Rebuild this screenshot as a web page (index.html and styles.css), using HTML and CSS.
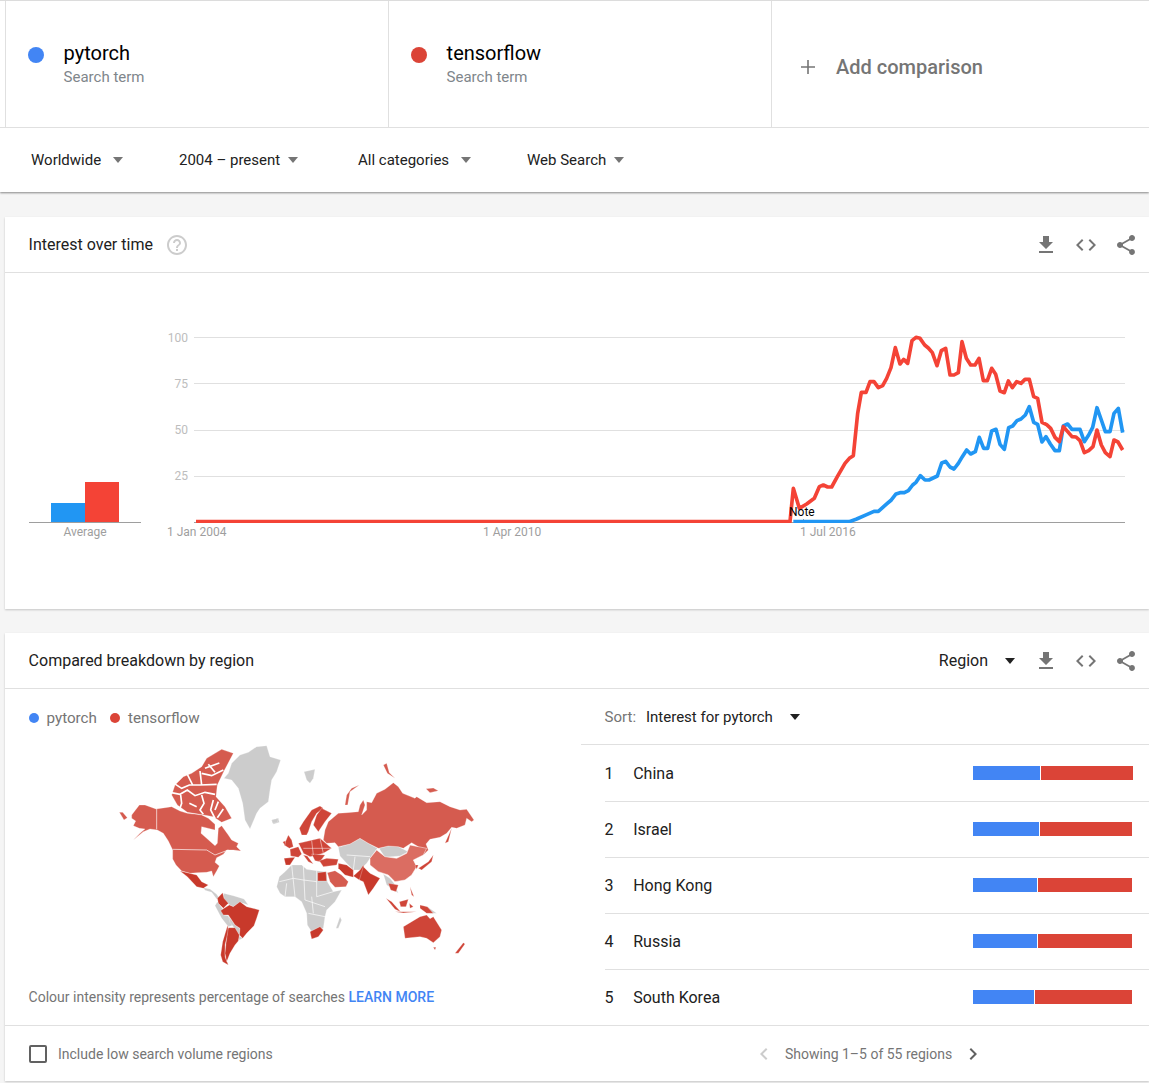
FILE: index.html
```html
<!DOCTYPE html>
<html lang="en">
<head>
<meta charset="utf-8">
<title>Google Trends - pytorch vs tensorflow</title>
<link rel="stylesheet" href="styles.css">
</head>
<body>
<header class="top">
  <div class="terms">
    <div class="term">
      <span class="dot dot-blue"></span>
      <div><div class="term-name">pytorch</div><div class="term-sub">Search term</div></div>
    </div>
    <div class="term">
      <span class="dot dot-red"></span>
      <div><div class="term-name">tensorflow</div><div class="term-sub">Search term</div></div>
    </div>
    <div class="term term-add">
      <svg class="plus" width="16" height="16" viewBox="0 0 16 16"><path d="M8 1v14M1 8h14" stroke="#757575" stroke-width="1.6" fill="none"/></svg>
      <span class="add-label">Add comparison</span>
    </div>
  </div>
  <div class="filters">
    <div class="filter filter-wide">Worldwide<span class="arrow"></span></div>
    <div class="filter">2004 – present<span class="arrow"></span></div>
    <div class="filter filter-wide">All categories<span class="arrow"></span></div>
    <div class="filter">Web Search<span class="arrow"></span></div>
  </div>
</header>

<main class="page">
  <section class="card">
    <div class="card-head">
      <h2 class="card-title">Interest over time</h2>
      <svg class="help" width="24" height="24" viewBox="0 0 24 24"><path d="M11 18h2v-2h-2v2zm1-16C6.48 2 2 6.48 2 12s4.48 10 10 10 10-4.48 10-10S17.52 2 12 2zm0 18c-4.41 0-8-3.59-8-8s3.59-8 8-8 8 3.59 8 8-3.59 8-8 8zm0-14c-2.21 0-4 1.79-4 4h2c0-1.1.9-2 2-2s2 .9 2 2c0 2-3 1.75-3 5h2c0-2.25 3-2.5 3-5 0-2.21-1.79-4-4-4z"/></svg>
      <div class="actions">
        <svg class="icon" width="24" height="24" viewBox="0 0 24 24"><path d="M19 9h-4V3H9v6H5l7 7 7-7zM5 18v2h14v-2H5z"/></svg>
        <svg class="icon" width="24" height="24" viewBox="0 0 24 24"><path d="M9.4 16.6L4.8 12l4.6-4.6L8 6l-6 6 6 6 1.4-1.4zm5.2 0l4.6-4.6-4.6-4.6L16 6l6 6-6 6-1.4-1.4z"/></svg>
        <svg class="icon" width="24" height="24" viewBox="0 0 24 24"><path d="M18 16.08c-.76 0-1.44.3-1.96.77L8.91 12.7c.05-.23.09-.46.09-.7s-.04-.47-.09-.7l7.05-4.11c.54.5 1.25.81 2.04.81 1.66 0 3-1.34 3-3s-1.34-3-3-3-3 1.34-3 3c0 .24.04.47.09.7L8.04 9.81C7.5 9.31 6.79 9 6 9c-1.66 0-3 1.34-3 3s1.34 3 3 3c.79 0 1.5-.31 2.04-.81l7.12 4.16c-.05.21-.08.43-.08.65 0 1.61 1.31 2.92 2.92 2.92 1.61 0 2.92-1.31 2.92-2.92s-1.31-2.92-2.92-2.92z"/></svg>
      </div>
    </div>
    <svg class="chart" width="1144" height="336" viewBox="5 273 1144 336">
      <defs>
        <clipPath id="plot-clip"><rect x="190" y="300" width="940" height="223"/></clipPath>
      </defs>
      <g class="grid">
        <line x1="194" x2="1125" y1="337.5" y2="337.5"/>
        <line x1="194" x2="1125" y1="383.5" y2="383.5"/>
        <line x1="194" x2="1125" y1="430.5" y2="430.5"/>
        <line x1="194" x2="1125" y1="476.5" y2="476.5"/>
      </g>
      <line class="axis" x1="29" x2="141" y1="522.5" y2="522.5"/>
      <line class="axis" x1="194" x2="1125" y1="522.5" y2="522.5"/>
      <line class="axis" x1="803.5" x2="803.5" y1="519" y2="522"/>
      <rect x="51" y="503" width="34" height="19" fill="#2196f3"/>
      <rect x="85" y="482" width="34" height="40" fill="#f44336"/>
      <g class="ylabels">
        <text x="188" y="342">100</text>
        <text x="188" y="388">75</text>
        <text x="188" y="434">50</text>
        <text x="188" y="480">25</text>
      </g>
      <text class="tick tick-mid" x="85" y="536">Average</text>
      <text class="tick" x="167" y="536">1 Jan 2004</text>
      <text class="tick" x="483" y="536">1 Apr 2010</text>
      <text class="tick" x="800" y="536">1 Jul 2016</text>
      <g clip-path="url(#plot-clip)">
        <g transform="translate(760 320) scale(.33333)">
          <polyline class="line line-blue" points="100,605 268,605 290,597 320,584 342,574 355,574 381,551 394,540 408,522 420,518 433,518 445,512 458,495 468,487 481,467 495,480 507,480 532,468 545,429 557,424 570,441 582,447 595,430 607,410 620,390 632,402 646,395 658,352 671,385 683,385 695,333 708,328 720,373 733,388 746,323 758,318 771,302 783,297 796,285 808,260 821,307 833,313 846,366 858,350 871,372 885,392 898,392 910,318 923,312 936,328 960,328 973,365 986,345 998,322 1011,263 1024,300 1036,335 1050,335 1062,280 1075,265 1088,338"/>
          <polyline class="line line-red" points="-1692,605 90,605 100,505 118,565 140,552 163,535 178,500 190,495 203,501 215,501 232,470 255,430 268,415 280,407 293,280 304,217 318,217 330,185 342,185 355,203 368,197 380,175 393,143 406,83 420,132 431,118 443,130 456,62 468,52 480,55 494,75 505,84 517,98 531,137 544,92 557,85 570,165 582,165 595,158 606,65 619,115 632,135 645,135 657,115 670,182 682,182 695,145 707,163 720,213 733,218 745,183 757,203 770,185 783,190 795,178 808,178 821,230 833,235 846,307 860,314 872,325 885,352 898,365 910,320 923,335 936,350 948,351 960,362 973,398 986,392 999,380 1011,330 1024,375 1036,398 1050,410 1062,360 1074,366 1088,390"/>
        </g>
      </g>
      <text class="note" x="789" y="516">Note</text>
    </svg>
  </section>

  <section class="card card-region">
    <div class="card-head">
      <h2 class="card-title">Compared breakdown by region</h2>
      <div class="region-select">Region<span class="arrow arrow-dark"></span></div>
      <div class="actions actions-region">
        <svg class="icon" width="24" height="24" viewBox="0 0 24 24"><path d="M19 9h-4V3H9v6H5l7 7 7-7zM5 18v2h14v-2H5z"/></svg>
        <svg class="icon" width="24" height="24" viewBox="0 0 24 24"><path d="M9.4 16.6L4.8 12l4.6-4.6L8 6l-6 6 6 6 1.4-1.4zm5.2 0l4.6-4.6-4.6-4.6L16 6l6 6-6 6-1.4-1.4z"/></svg>
        <svg class="icon" width="24" height="24" viewBox="0 0 24 24"><path d="M18 16.08c-.76 0-1.44.3-1.96.77L8.91 12.7c.05-.23.09-.46.09-.7s-.04-.47-.09-.7l7.05-4.11c.54.5 1.25.81 2.04.81 1.66 0 3-1.34 3-3s-1.34-3-3-3-3 1.34-3 3c0 .24.04.47.09.7L8.04 9.81C7.5 9.31 6.79 9 6 9c-1.66 0-3 1.34-3 3s1.34 3 3 3c.79 0 1.5-.31 2.04-.81l7.12 4.16c-.05.21-.08.43-.08.65 0 1.61 1.31 2.92 2.92 2.92 1.61 0 2.92-1.31 2.92-2.92s-1.31-2.92-2.92-2.92z"/></svg>
      </div>
    </div>
    <div class="region-body">
      <div class="region-left">
        <div class="legend">
          <span class="legend-dot dot-blue"></span><span class="legend-label">pytorch</span>
          <span class="legend-dot dot-red"></span><span class="legend-label">tensorflow</span>
        </div>
        <svg class="map" width="400" height="240" viewBox="100 735 400 240">
          <g transform="translate(100 735) scale(.33333)">
            <g class="grey">
              <polygon points="372,130 385,115 395,85 420,60 445,52 470,35 500,32 510,65 542,75 530,110 515,135 510,165 505,200 480,220 470,235 450,282 435,255 428,205 415,160 395,135"/>
              <polygon points="515,255 535,250 538,262 520,268"/>
              <polygon points="310,458 330,462 350,478 358,490 350,492 335,472 315,466"/>
              <polygon points="370,475 400,482 432,492 445,510 420,502 400,515 388,510 372,492"/>
              <polygon points="345,512 352,500 368,522 372,540 385,542 400,570 385,575 365,550"/>
              <polygon points="385,542 405,570 420,580 418,600 400,575 390,562"/>
              <polygon points="412,600 428,610 418,615"/>
            </g>
            <g class="mid">
              <polygon points="95,240 118,210 135,210 168,222 195,218 215,215 240,228 262,235 290,238 305,240 325,250 345,268 345,285 305,275 303,295 320,310 345,332 352,325 355,280 365,272 385,300 395,315 415,325 410,335 423,348 400,345 380,345 370,358 350,368 345,382 358,393 350,408 340,425 335,408 320,412 290,413 270,415 245,408 228,390 218,372 218,345 205,318 190,295 172,285 150,282 130,290 100,315 120,295 135,282 118,280 100,272 107,258 95,250"/>
              <polygon points="58,232 68,232 82,248 72,255"/>
              <polygon points="215,180 225,150 250,125 275,115 305,95 320,70 365,43 400,55 372,108 352,150 348,185 375,215 395,250 365,262 340,245 300,238 262,232 232,210"/>
            </g>
            <g class="white-lines">
              <polyline points="170,222 170,283"/>
              <polyline points="218,343 320,345 345,360 385,345"/>
            </g>
            <g class="cuts">
              <polyline points="210,172 240,178 262,165 285,182 315,172 345,178"/>
              <polyline points="242,180 245,205 238,225"/>
              <polyline points="305,180 312,205 300,225 310,238"/>
              <polyline points="340,195 332,225 345,250"/>
              <polyline points="222,145 245,160 268,150 300,150 350,148"/>
              <polyline points="262,118 278,150"/>
              <polyline points="300,108 305,150"/>
              <polyline points="305,115 335,122 370,105"/>
              <polyline points="325,88 345,112"/>
              <polyline points="315,100 358,84"/>
              <polyline points="355,200 345,225"/>
              <polyline points="370,222 352,248"/>
              <polyline points="268,205 290,215"/>
            </g>
            <g class="dark">
              <polygon points="240,408 290,420 305,440 325,450 310,460 290,455 262,425"/>
              <polygon points="352,490 368,473 372,490 385,505 370,520 355,505"/>
              <polygon points="362,527 372,520 388,510 400,515 420,500 440,515 478,525 470,550 462,572 440,595 428,610 418,600 420,580 405,570 385,540 370,540"/>
              <polygon points="383,570 385,590 375,630 375,665 385,690 368,680 362,660 368,620"/>
              <polygon points="385,578 405,578 418,600 415,618 405,630 390,655 380,680 375,655 378,625"/>
            </g>
          </g>
          <g transform="translate(270 750) scale(.33333)">
            <g class="grey">
              <polygon points="20,410 28,380 45,365 65,345 95,345 110,358 140,362 170,365 172,395 190,425 215,420 195,455 170,480 165,500 160,535 125,545 112,525 110,490 95,455 75,440 45,440 30,430"/>
              <polygon points="198,535 210,500 215,510 205,535"/>
              <polygon points="102,65 135,58 130,85 120,100 110,90"/>
              <polygon points="5,210 25,205 22,218 8,220"/>
              <polygon points="205,292 240,282 270,265 295,280 322,295 305,318 290,340 270,360 250,360 230,340 210,318"/>
              <polygon points="327,295 355,288 385,290 415,305 390,318 345,322"/>
              <polygon points="340,372 360,385 372,400 385,430 365,415 350,405"/>
              <polygon points="472,470 500,490 480,490"/>
            </g>
            <g class="white-lines">
              <polyline points="28,395 70,385 100,390 140,395"/>
              <polyline points="65,345 75,440"/>
              <polyline points="100,345 105,450"/>
              <polyline points="140,362 140,440 190,425"/>
              <polyline points="105,450 165,470"/>
              <polyline points="115,490 165,500"/>
              <polyline points="125,440 130,490"/>
              <polyline points="50,400 45,440"/>
              <polyline points="230,315 300,320"/>
              <polyline points="255,320 250,360"/>
            </g>
            <g class="mid">
              <polygon points="160,270 165,240 175,215 205,190 230,188 265,185 270,165 280,150 285,165 275,195 290,180 290,155 305,158 320,130 345,118 370,98 385,110 398,130 435,145 440,140 470,158 510,155 540,170 570,180 590,178 612,210 605,215 590,205 585,225 560,235 545,232 530,250 510,262 480,268 468,282 475,300 460,315 445,290 425,278 400,295 385,290 355,288 325,295 295,280 270,265 240,282 205,290 195,278 170,280"/>
              <polygon points="225,165 230,135 245,115 268,105 240,125 233,165"/>
              <polygon points="340,45 350,40 358,68 375,85 352,70"/>
              <polygon points="468,116 490,114 505,122 480,128"/>
              <polygon points="172,368 195,362 215,375 235,395 228,410 195,412 180,395"/>
            </g>
            <g class="light">
              <polygon points="300,325 320,300 345,320 380,325 410,310 420,285 445,290 470,295 460,315 430,330 440,350 425,375 405,390 375,395 355,375 325,365 300,345"/>
            </g>
            <g class="red">
              <polygon points="88,235 100,215 125,180 150,168 160,175 140,190 125,215 115,245 110,255 95,255"/>
              <polygon points="155,175 185,190 165,215 145,245 130,225 140,195"/>
              <polygon points="42,285 55,255 65,270 70,290 58,295"/>
              <polygon points="38,276 47,272 45,286"/>
              <polygon points="60,298 85,290 95,312 85,322 62,318"/>
              <polygon points="85,280 150,265 185,295 160,310 120,320 100,310"/>
              <polygon points="100,315 112,318 130,342 115,335"/>
              <polygon points="125,312 165,315 150,335 135,332"/>
              <polygon points="148,332 170,325 205,328 200,345 160,350"/>
              <polygon points="400,530 425,515 450,500 470,495 480,506 490,500 515,540 510,560 490,578 470,565 450,560 405,565"/>
              <polygon points="490,592 498,592 495,600"/>
              <polygon points="348,445 365,455 392,485 375,478"/>
              <polygon points="388,455 415,448 408,470 392,470"/>
              <polygon points="375,485 440,485 400,489"/>
              <polygon points="418,460 430,470 420,475"/>
              <polygon points="450,465 472,470 490,490 470,490 450,475"/>
              <polygon points="420,410 432,440 425,435"/>
              <polygon points="445,355 475,335 490,315 485,335 455,360"/>
              <polygon points="435,345 445,345 440,358"/>
              <polygon points="525,280 545,235 535,275"/>
              <polygon points="555,610 580,578 585,582 565,610"/>
              <polygon points="355,400 385,405 378,425 362,420"/>
            </g>
            <g class="dark">
              <polygon points="120,545 150,530 160,540 145,560 125,567"/>
              <polygon points="143,368 168,365 170,393 143,393"/>
              <polygon points="205,340 230,345 250,360 250,382 225,375 205,355"/>
              <polygon points="250,378 270,360 280,345 285,365 268,390"/>
              <polygon points="280,350 300,370 330,385 310,415 295,435 280,395 268,390"/>
              <polygon points="42,325 75,322 60,345 47,345"/>
            </g>
            <g class="white-lines thin">
              <polyline points="85,280 100,310"/>
              <polyline points="125,272 130,315"/>
              <polyline points="150,265 160,310"/>
              <polyline points="100,295 185,295"/>
            </g>
          </g>
        </svg>
        <p class="caption">Colour intensity represents percentage of searches <a class="learn" href="#">LEARN MORE</a></p>
      </div>
      <div class="region-right">
        <div class="sort">
          <span class="sort-label">Sort:</span>
          <span class="sort-value">Interest for pytorch</span>
          <span class="arrow arrow-dark"></span>
        </div>
        <ol class="rows">
          <li class="row"><span class="num">1</span><span class="name">China</span><span class="bars"><i class="bar-b" style="width:67px"></i><i class="bar-r" style="width:92px"></i></span></li>
          <li class="row"><span class="num">2</span><span class="name">Israel</span><span class="bars"><i class="bar-b" style="width:66px"></i><i class="bar-r" style="width:92px"></i></span></li>
          <li class="row"><span class="num">3</span><span class="name">Hong Kong</span><span class="bars"><i class="bar-b" style="width:64px"></i><i class="bar-r" style="width:94px"></i></span></li>
          <li class="row"><span class="num">4</span><span class="name">Russia</span><span class="bars"><i class="bar-b" style="width:64px"></i><i class="bar-r" style="width:94px"></i></span></li>
          <li class="row"><span class="num">5</span><span class="name">South Korea</span><span class="bars"><i class="bar-b" style="width:61px"></i><i class="bar-r" style="width:97px"></i></span></li>
        </ol>
      </div>
    </div>
    <div class="card-foot">
      <span class="checkbox"></span>
      <span class="check-label">Include low search volume regions</span>
      <div class="pager">
        <svg class="chev chev-off" width="24" height="24" viewBox="0 0 24 24"><path d="M15.41 7.41L14 6l-6 6 6 6 1.41-1.41L10.83 12z"/></svg>
        <span class="pager-text">Showing 1–5 of 55 regions</span>
        <svg class="chev" width="24" height="24" viewBox="0 0 24 24"><path d="M10 6L8.59 7.41 13.17 12l-4.58 4.59L10 18l6-6z"/></svg>
      </div>
    </div>
  </section>
</main>
</body>
</html>
```
FILE: styles.css
```css
* { box-sizing: border-box; }
html, body { margin: 0; padding: 0; }
body {
  width: 1149px;
  height: 1083px;
  overflow: hidden;
  background: #f5f5f5;
  font-family: Roboto, "Liberation Sans", sans-serif;
  color: #212121;
}
.top {
  background: #fff;
  border-top: 1px solid #dcdcdc;
  box-shadow: 0 1px 2px rgba(0, 0, 0, .45);
  position: relative;
}
.terms {
  display: flex;
  height: 127px;
  padding-left: 5px;
  border-bottom: 1px solid #e0e0e0;
}
.term {
  width: 383px;
  border-left: 1px solid #e0e0e0;
  display: flex;
  align-items: flex-start;
  padding: 40px 0 0 22px;
  gap: 19.6px;
}
.dot { display: block; width: 16px; height: 16px; border-radius: 50%; margin-top: 6px; flex: none; }
.dot-blue { background: #4285f4; }
.dot-red { background: #db4437; }
.term-name { font-size: 20px; line-height: 24px; color: #000; }
.term-sub { font-size: 15px; line-height: 25px; color: #80868b; }
.term-add {
  flex: 1;
  padding: 6px 0 0 28px;
  align-items: center;
  gap: 20px;
}
.add-label { font-size: 20px; font-weight: 500; color: #757575; }
.plus { flex: none; }
.filters {
  display: grid;
  grid-template-columns: 148px 179px 169px auto;
  align-items: center;
  justify-content: start;
  height: 64px;
  padding-left: 31px;
  font-size: 15px;
}
.filter { display: flex; align-items: center; gap: 8px; }
.filter-wide { gap: 12px; }
.arrow {
  display: block;
  width: 0;
  height: 0;
  border-left: 5.5px solid transparent;
  border-right: 5.5px solid transparent;
  border-top: 6px solid #757575;
  flex: none;
}
.arrow-dark { border-top-color: #212121; }
.page { padding: 25px 0 0 5px; }
.card {
  background: #fff;
  box-shadow: 0 1px 2px rgba(0, 0, 0, .2);
}
.card-region { margin-top: 24px; }
.card-head {
  display: flex;
  align-items: center;
  height: 56px;
  padding: 0 11px 0 23.6px;
  border-bottom: 1px solid #e0e0e0;
}
.card-title { margin: 0; font-size: 16px; font-weight: 400; color: #212121; }
.help { fill: #ccc; margin-left: 12px; }
.actions { display: flex; gap: 16px; margin-left: auto; }
.actions-region { margin-left: 16px; }
.icon { fill: #757575; display: block; }
.region-select {
  display: flex;
  align-items: center;
  gap: 17px;
  margin-left: auto;
  font-size: 16px;
}
.region-select .arrow { margin-right: 3px; }
.chart { display: block; }
.grid line { stroke: #e0e0e0; stroke-width: 1; }
.axis { stroke: #9e9e9e; stroke-width: 1; }
.ylabels text { font-size: 12px; fill: #bdbdbd; text-anchor: end; }
.tick { font-size: 12px; fill: #9e9e9e; }
.tick-mid { text-anchor: middle; }
.note { font-size: 12px; fill: #000; }
.line { fill: none; stroke-width: 11; stroke-linejoin: round; }
.line-blue { stroke: #2196f3; }
.line-red { stroke: #f44336; }
.region-body { display: flex; height: 336px; }
.region-left { width: 576px; display: flex; flex-direction: column; }
.legend {
  display: flex;
  align-items: center;
  height: 46px;
  padding: 12px 0 0 24px;
  font-size: 15.2px;
  color: #757575;
}
.legend-dot { width: 10px; height: 10px; border-radius: 50%; margin-right: 7.5px; }
.legend-label { margin-right: 13.5px; }
.map { display: block; margin-left: 95px; flex: none; }
.grey polygon { fill: #ccc; stroke: #fff; stroke-width: .8; }
.mid polygon { fill: #d55b4f; stroke: #fff; stroke-width: .8; }
.light polygon { fill: #db6d62; stroke: #fff; stroke-width: 1.5; }
.red polygon { fill: #cf4538; stroke: #fff; stroke-width: .8; }
.dark polygon { fill: #c8392b; stroke: #fff; stroke-width: .8; }
.white-lines polyline { fill: none; stroke: #fff; stroke-width: 2; }
.thin polyline { stroke-width: 1.5; }
.cuts polyline { fill: none; stroke: #fff; stroke-width: 5; }
.caption { margin: 14px 0 0 23.6px; font-size: 14px; line-height: 16px; color: #757575; white-space: nowrap; }
.learn { color: #4285f4; font-weight: 500; text-decoration: none; }
.region-right { flex: 1; }
.sort {
  display: flex;
  align-items: center;
  height: 56px;
  padding-left: 23.6px;
  border-bottom: 1px solid #e0e0e0;
  font-size: 15px;
}
.sort-label { color: #757575; width: 41.4px; }
.sort-value { width: 144px; color: #212121; }
.rows { list-style: none; margin: 0; padding: 0 0 0 24px; }
.row {
  display: flex;
  align-items: center;
  height: 56px;
  border-bottom: 1px solid #e0e0e0;
  font-size: 16px;
}
.row:first-child { height: 57px; }
.row:last-child { border-bottom: 0; height: 54px; }
.num { width: 28.6px; margin-left: -.4px; }
.name { flex: 1; }
.bars { display: flex; gap: 1px; width: 176px; margin-top: -1px; }
.bars i { display: block; height: 14px; }
.bar-b { background: #4285f4; }
.bar-r { background: #db4437; }
.card-foot {
  display: flex;
  align-items: center;
  height: 56px;
  padding: 0 0 0 24px;
  border-top: 1px solid #e0e0e0;
  font-size: 14px;
  color: #757575;
}
.checkbox { width: 18px; height: 18px; border: 2px solid #616161; border-radius: 2px; margin-right: 11px; flex: none; }
.check-label { width: 694px; flex: none; }
.pager { display: flex; align-items: center; gap: 9px; }
.pager-text { color: #757575; width: 167px; white-space: nowrap; }
.chev { fill: #616161; display: block; flex: none; }
.chev-off { fill: #ccc; }
```
